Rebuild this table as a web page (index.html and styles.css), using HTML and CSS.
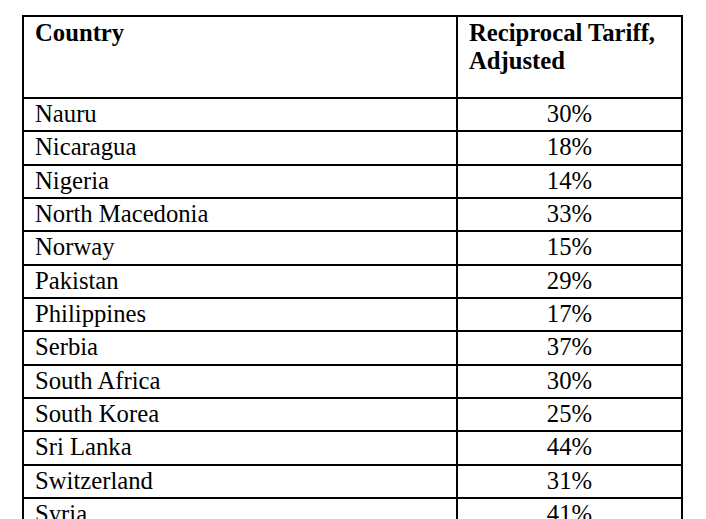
FILE: index.html
```html
<!DOCTYPE html>
<html lang="en">
<head>
<meta charset="utf-8">
<title>Reciprocal Tariff, Adjusted</title>
<link rel="stylesheet" href="styles.css">
</head>
<body>
<table class="tariffs">
  <colgroup>
    <col class="col-country">
    <col class="col-rate">
  </colgroup>
  <thead>
    <tr class="head-row">
      <th class="cell-country">Country</th>
      <th class="cell-head-rate">Reciprocal Tariff,<br>Adjusted</th>
    </tr>
  </thead>
  <tbody>
    <tr><td class="cell-country">Nauru</td><td class="cell-rate">30%</td></tr>
    <tr><td class="cell-country">Nicaragua</td><td class="cell-rate">18%</td></tr>
    <tr><td class="cell-country">Nigeria</td><td class="cell-rate">14%</td></tr>
    <tr><td class="cell-country">North Macedonia</td><td class="cell-rate">33%</td></tr>
    <tr><td class="cell-country">Norway</td><td class="cell-rate">15%</td></tr>
    <tr><td class="cell-country">Pakistan</td><td class="cell-rate">29%</td></tr>
    <tr><td class="cell-country">Philippines</td><td class="cell-rate">17%</td></tr>
    <tr><td class="cell-country">Serbia</td><td class="cell-rate">37%</td></tr>
    <tr><td class="cell-country">South Africa</td><td class="cell-rate">30%</td></tr>
    <tr><td class="cell-country">South Korea</td><td class="cell-rate">25%</td></tr>
    <tr><td class="cell-country">Sri Lanka</td><td class="cell-rate">44%</td></tr>
    <tr><td class="cell-country">Switzerland</td><td class="cell-rate">31%</td></tr>
    <tr><td class="cell-country">Syria</td><td class="cell-rate">41%</td></tr>
  </tbody>
</table>
</body>
</html>
```

FILE: styles.css
```css
html {
  overflow: hidden;
  background: #fff;
}

body {
  margin: 0;
  padding: 15px 0 0 22px;
  font-family: "Liberation Serif", "Times New Roman", serif;
  font-size: 24.7px;
  line-height: 28px;
  color: #000;
}

.tariffs {
  border-collapse: collapse;
  table-layout: fixed;
  width: 659px;
  border: 2px solid #000;
}

.col-country {
  width: 434px;
}

.col-rate {
  width: 225px;
}

.tariffs th,
.tariffs td {
  border: 2px solid #000;
  padding: 1px 11px 0 11px;
  vertical-align: top;
  height: 33.33px;
  box-sizing: border-box;
}

.head-row th {
  height: 82px;
  padding-top: 2px;
  font-weight: bold;
  text-align: left;
}

.cell-rate {
  text-align: center;
}
```
